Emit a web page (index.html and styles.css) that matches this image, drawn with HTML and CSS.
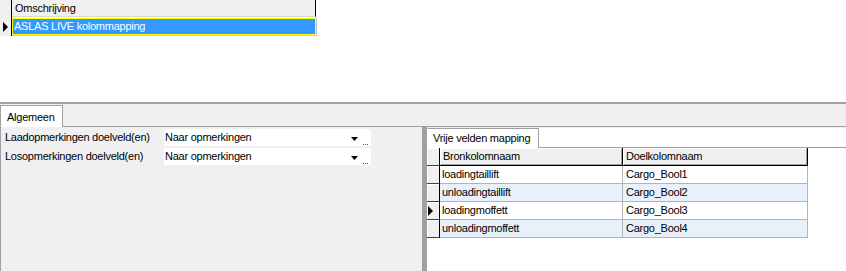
FILE: index.html
```html
<!DOCTYPE html>
<html>
<head>
<meta charset="utf-8">
<link rel="stylesheet" href="styles.css">
</head>
<body>
<div class="top-grid">
  <div class="tg-row head">
    <div class="tg-ind"></div>
    <div class="tg-head">Omschrijving</div>
  </div>
  <div class="tg-row sel">
    <div class="tg-ind"><span class="tri"></span></div>
    <div class="tg-selwrap"><div class="tg-sel">ASLAS LIVE kolommapping</div></div>
  </div>
</div>
<div class="spacer"></div>
<div class="hsplit"></div>
<div class="tabstrip">
  <div class="tab">Algemeen</div>
</div>
<div class="page">
  <div class="left">
    <div class="frow">
      <div class="flabel">Laadopmerkingen doelveld(en)</div>
      <div class="field">
        <span class="ftext">Naar opmerkingen</span>
        <svg class="arrow" width="7" height="4" viewBox="0 0 7 4"><polygon points="0,0 7,0 3.5,4" fill="#000"/></svg>
        <svg class="dots" width="6" height="1" viewBox="0 0 6 1"><rect x="0" y="0" width="1" height="1" fill="#555"/><rect x="2" y="0" width="1" height="1" fill="#555"/><rect x="4" y="0" width="1" height="1" fill="#555"/></svg>
      </div>
    </div>
    <div class="frow">
      <div class="flabel">Losopmerkingen doelveld(en)</div>
      <div class="field">
        <span class="ftext">Naar opmerkingen</span>
        <svg class="arrow" width="7" height="4" viewBox="0 0 7 4"><polygon points="0,0 7,0 3.5,4" fill="#000"/></svg>
        <svg class="dots" width="6" height="1" viewBox="0 0 6 1"><rect x="0" y="0" width="1" height="1" fill="#555"/><rect x="2" y="0" width="1" height="1" fill="#555"/><rect x="4" y="0" width="1" height="1" fill="#555"/></svg>
      </div>
    </div>
  </div>
  <div class="vsplit"></div>
  <div class="right">
    <div class="rtop"></div>
    <div class="tabstrip2"><div class="tab2">Vrije velden mapping</div></div>
    <div class="grid">
      <div class="grow ghead">
        <div class="gind"></div>
        <div class="gh c1">Bronkolomnaam</div>
        <div class="gh c2">Doelkolomnaam</div>
      </div>
      <div class="grow">
        <div class="gind"></div>
        <div class="gc c1">loadingtaillift</div>
        <div class="gc c2">Cargo_Bool1</div>
      </div>
      <div class="grow alt">
        <div class="gind"></div>
        <div class="gc c1">unloadingtaillift</div>
        <div class="gc c2">Cargo_Bool2</div>
      </div>
      <div class="grow">
        <div class="gind"><span class="tri"></span></div>
        <div class="gc c1">loadingmoffett</div>
        <div class="gc c2">Cargo_Bool3</div>
      </div>
      <div class="grow alt">
        <div class="gind"></div>
        <div class="gc c1">unloadingmoffett</div>
        <div class="gc c2">Cargo_Bool4</div>
      </div>
    </div>
  </div>
</div>
</body>
</html>
```
FILE: styles.css
```css
* { box-sizing: border-box; }
html, body { margin: 0; padding: 0; }
body {
  width: 846px;
  height: 271px;
  overflow: hidden;
  background: #fff;
  color: #000;
  font: 11px "Liberation Sans", Arial, sans-serif;
  letter-spacing: -0.25px;
  display: flex;
  flex-direction: column;
}

/* top grid */
.top-grid { width: 317px; flex: none; }
.tg-row { display: flex; }
.tg-row.head { height: 17px; }
.tg-row.sel { height: 19px; }
.tg-ind {
  width: 12px;
  border-right: 1px solid #000;
  background: #f0f0f0;
  display: flex;
  align-items: center;
  padding-left: 3px;
}
.tg-head {
  width: 304px;
  background: #f0f0f0;
  border-right: 1px solid #000;
  border-bottom: 1px solid #d8d8d8;
  padding-left: 3px;
  line-height: 16px;
}
.tg-selwrap {
  width: 305px;
  padding-top: 1px;
  border-right: 1px solid #c8c8c8;
  border-bottom: 1px solid #c8c8c8;
}
.tg-sel {
  height: 17px;
  background: #3399ff;
  border: 1px solid #ffff00;
  color: #fff;
  padding-left: 1px;
  line-height: 15px;
  white-space: nowrap;
}
.tri {
  display: block;
  width: 0;
  height: 0;
  border-left: 5px solid #000;
  border-top: 5px solid transparent;
  border-bottom: 5px solid transparent;
}

.spacer { height: 66px; flex: none; }
.hsplit { height: 2px; background: #a0a0a0; flex: none; }

/* main tab strip */
.tabstrip {
  height: 23px;
  flex: none;
  background: #f0f0f0;
  border-bottom: 1px solid #a0a0a0;
  display: flex;
  align-items: flex-end;
}
.tab {
  width: 63px;
  height: 22px;
  margin-bottom: -1px;
  background: #fff;
  border: 1px solid #a0a0a0;
  border-bottom: none;
  padding-left: 6px;
  padding-top: 3px;
  line-height: 16px;
}

.page { flex: 1; display: flex; min-height: 0; }
.left {
  width: 422px;
  background: #f0f0f0;
  border-left: 1px solid #a0a0a0;
  padding-top: 2px;
  padding-left: 4px;
  display: flex;
  flex-direction: column;
  gap: 2px;
}
.frow { display: flex; height: 17px; }
.flabel { width: 159px; line-height: 17px; white-space: nowrap; }
.field {
  width: 207px;
  background: #fff;
  display: flex;
  padding-left: 1px;
}
.ftext { flex: 1; line-height: 17px; white-space: nowrap; }
.arrow { flex: none; margin-top: 8px; margin-right: 5px; }
.dots { flex: none; margin-top: 15px; margin-right: 2px; }

.vsplit { width: 5px; background: #a0a0a0; flex: none; }

.right { flex: 1; background: #fff; display: flex; flex-direction: column; }
.rtop { height: 1px; background: #f0f0f0; flex: none; }
.tabstrip2 {
  height: 20px;
  flex: none;
  border-bottom: 1px solid #a0a0a0;
  display: flex;
}
.tab2 {
  width: 112px;
  height: 20px;
  background: #fff;
  border: 1px solid #a0a0a0;
  border-left-color: #fff;
  border-bottom: none;
  padding-left: 5px;
  line-height: 18px;
  white-space: nowrap;
}

.grid { display: flex; flex-direction: column; }
.grow { display: flex; height: 18px; }
.gind {
  width: 13px;
  background: #f0f0f0;
  border-right: 1px solid #000;
  border-bottom: 1px solid #404040;
  box-shadow: inset 1px 1px 0 #fff;
  display: flex;
  align-items: center;
  padding-left: 1px;
}
.c1 { width: 183px; }
.c2 { width: 185px; }
.gh {
  background: #f0f0f0;
  border-right: 1px solid #000;
  border-bottom: 1px solid #000;
  box-shadow: inset 1px 1px 0 #fff, inset -1px -1px 0 #a0a0a0;
  padding-left: 3px;
  line-height: 17px;
  white-space: nowrap;
}
.gc {
  background: #fff;
  border-right: 1px solid #b4b4b4;
  border-bottom: 1px solid #b4b4b4;
  padding-left: 2px;
  line-height: 17px;
  white-space: nowrap;
}
.gc.c2 { padding-left: 3px; }
.grow.alt .gc { background: #e8f1fb; }
```
